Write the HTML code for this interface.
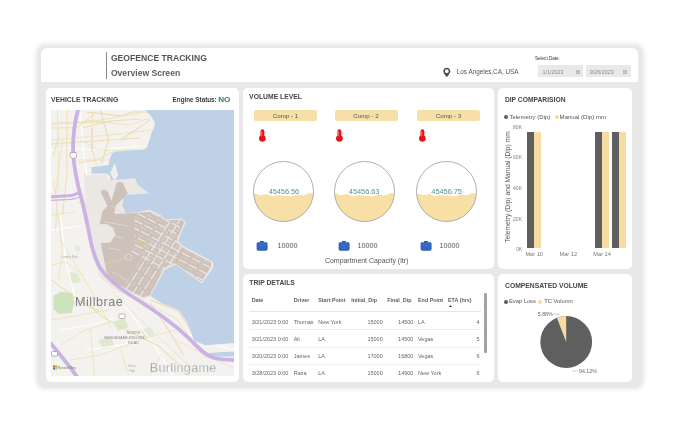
<!DOCTYPE html>
<html><head><meta charset="utf-8">
<style>
*{margin:0;padding:0;box-sizing:border-box}
html,body{width:680px;height:440px;background:#fff;overflow:hidden;font-family:"Liberation Sans",sans-serif;color:#333}
.a{position:absolute}
.t{position:absolute;white-space:nowrap;line-height:1}
.b{font-weight:bold}
#frame{left:37px;top:44.5px;width:606px;height:343.5px;background:#e8e8e8;border-radius:9px;box-shadow:0 0 4px 2px #ededed}
#hdr{left:41px;top:48px;width:597px;height:34px;background:#fff;border-radius:6px 6px 0 0}
.p{position:absolute;background:#fff;border-radius:5px}
.pill{top:109.8px;width:63px;height:11.2px;background:#f7dfa8;border-radius:2px;font-size:6.15px;line-height:11.2px;text-align:center;color:#555}
.thermo{top:128.5px;width:9px;height:13px}
.tank{top:161.3px;width:61px;height:61px}
.val{top:188.1px;width:61px;text-align:center;font-size:7.5px;color:#559595;letter-spacing:-0.1px}
.brief{top:239.6px;width:12px;height:11px}
.cap{top:242.2px;font-size:7.2px;color:#555}
.th{top:298.1px;font-size:5.4px;font-weight:bold;color:#5e5e5e}
.td{font-size:5.5px;color:#666}
.r{width:40px;text-align:right}
.dot{width:4px;height:4px;border-radius:50%}
.lg{color:#555}
.yl{left:502px;width:20px;text-align:right;font-size:5px;color:#808080;margin-top:0.8px}
.xl{top:251.8px;font-size:5.65px;color:#777}
.pl{font-size:5.25px;color:#666}
</style></head><body><div id="wrap" style="position:absolute;left:0;top:0;width:680px;height:440px;will-change:transform">
<div id="frame" class="a"></div>
<div id="hdr" class="a"></div>
<!-- header -->
<div class="a" style="left:105.5px;top:51.7px;width:1.3px;height:27.7px;background:#8a8a8a"></div>
<div class="t b" style="left:110.9px;top:53.7px;font-size:8.6px;color:#555">GEOFENCE TRACKING</div>
<div class="t b" style="left:110.9px;top:69.1px;font-size:8.6px;color:#5c5c5c">Overview Screen</div>
<svg class="a" style="left:442px;top:67px" width="10" height="11" viewBox="0 0 10 11"><path d="M4.8 0.7C2.9 0.7 1.3 2.3 1.3 4.2C1.3 6.4 4.8 10 4.8 10C4.8 10 8.3 6.4 8.3 4.2C8.3 2.3 6.7 0.7 4.8 0.7ZM4.8 2.3A1.9 1.9 0 1 1 4.8 6.1A1.9 1.9 0 1 1 4.8 2.3Z" fill="#4a4a4a" fill-rule="evenodd"/></svg>
<div class="t" style="left:456.8px;top:68.6px;font-size:6.35px;color:#555">Los Angeles,CA, USA</div>
<div class="t" style="left:534.9px;top:56.6px;font-size:4.6px;color:#333">Select Date:</div>
<div class="a" style="left:538.4px;top:65.4px;width:44.2px;height:12.1px;background:#e9e9e9"></div>
<div class="t" style="left:542.4px;top:69.6px;font-size:5.4px;color:#8a8a8a">1/1/2023</div>
<div class="a" style="left:585.8px;top:65.4px;width:44.8px;height:12.1px;background:#e9e9e9"></div>
<div class="t" style="left:589.8px;top:69.6px;font-size:5.4px;color:#8a8a8a">9/26/2023</div>
<svg class="a" style="left:575.5px;top:69.5px" width="4" height="4"><rect x="0.3" y="0.3" width="3.4" height="3.4" fill="none" stroke="#aaa" stroke-width="0.6"/><path d="M0.3 1.5H3.7M1.5 1.5V3.7M2.5 1.5V3.7" stroke="#aaa" stroke-width="0.5"/></svg>
<svg class="a" style="left:623px;top:69.5px" width="4" height="4"><rect x="0.3" y="0.3" width="3.4" height="3.4" fill="none" stroke="#aaa" stroke-width="0.6"/><path d="M0.3 1.5H3.7M1.5 1.5V3.7M2.5 1.5V3.7" stroke="#aaa" stroke-width="0.5"/></svg>

<!-- panels -->
<div class="p" style="left:46px;top:88px;width:192.5px;height:293.5px"></div>
<div class="p" style="left:242.5px;top:88px;width:251px;height:180.5px"></div>
<div class="p" style="left:242.5px;top:273.5px;width:251px;height:108px"></div>
<div class="p" style="left:498px;top:88px;width:134px;height:180.5px"></div>
<div class="p" style="left:498px;top:273.5px;width:134px;height:108px"></div>

<!-- vehicle tracking -->
<div class="t b" style="left:51px;top:97.2px;font-size:6.8px;color:#454545">VEHICLE TRACKING</div>
<div class="t b" style="left:172.6px;top:96.6px;font-size:6.3px;color:#3a3a3a">Engine Status:</div>
<div class="t b" style="left:218.2px;top:96px;font-size:8.1px;color:#2a806e">NO</div>
<!--MAP-->
<svg class="a" style="left:50.5px;top:110px" width="183" height="265.5" viewBox="50.5 110 183 265.5">
<rect x="50" y="109" width="185" height="268" fill="#f3f2ee"/>
<!-- parks -->
<path d="M53,296 L60,292 L72,293 L74,303 L71,313 L58,314 L53,309Z" fill="#cde3bd"/>
<path d="M70,272 L78,274 L80,282 L72,283 L68,278Z" fill="#dfeacf"/>
<path d="M98,340 L110,337 L114,346 L102,349Z" fill="#dfe9cf"/>
<path d="M113,322 L124,318 L128,327 L117,331Z" fill="#dce8cb"/>
<path d="M140,330 L150,327 L154,336 L144,338Z" fill="#e2ebd5"/>
<path d="M75,245 L80,247 L79,252 L74,250Z" fill="#e3ecd6"/>
<!-- white roads -->
<g fill="none" stroke="#ffffff" stroke-width="1.2">
<path d="M50,150 L70,148 L100,150 L140,146"/>
<path d="M50,230 L80,226"/>
<path d="M80,112 L84,160 L88,185"/>
<path d="M60,215 L65,260 L75,300"/>
<path d="M120,300 L150,340 L172,375"/>
<path d="M60,330 L90,325 L115,318"/>
<path d="M85,350 L120,345 L160,335"/>
<path d="M175,328 L205,342 L233,350"/>
</g>
<!-- minor roads -->
<g fill="none" stroke="#ede0b8" stroke-width="0.8">
<path d="M50,125 L100,120 L140,113"/>
<path d="M50,140 L72,138 L110,135 L150,130"/>
<path d="M57,110 L58,180 L55,230"/>
<path d="M62,140 L54,200"/>
<path d="M92,112 L92,150 L96,165"/>
<path d="M80,140 L98,150 L140,150"/>
<path d="M72,160 L110,160"/>
<path d="M85,120 L128,125 L150,118"/>
<path d="M50,215 L75,212"/>
<path d="M50,265 L65,262 L84,276"/>
<path d="M60,240 L90,290 L112,330"/>
<path d="M50,320 L80,315 L108,310"/>
<path d="M60,345 L85,330 L110,322"/>
<path d="M70,360 L100,355 L140,340 L175,330"/>
<path d="M110,290 L140,320 L170,348 L195,372"/>
<path d="M140,300 L175,318 L205,358"/>
<path d="M120,350 L128,375"/>
<path d="M160,355 L150,375"/>
<path d="M90,330 L94,375"/>
<path d="M175,340 L215,360 L233,368"/>
<path d="M53,180 L62,250 L58,280"/>
</g>
<g fill="none" stroke="#ebd9a8" stroke-width="1">
<path d="M100,110 L108,140 L101,164"/>
<path d="M86,112 L120,116 L132,112 L150,112"/>
<path d="M150,120 L120,140"/>
<path d="M84,174 L95,200 L87,207 L78,202"/>
<path d="M83,302 L104,318 L130,332 L158,346 L187,372"/>
<path d="M51,280 L78,300 L100,312"/>
<path d="M150,303 L168,330 L183,355"/>
<path d="M150,300 L178,311 L190,330 L196,342"/>
</g>
<g fill="none" stroke="#eedfae" stroke-width="1">
<path d="M50,123 L110,122"/>
<path d="M50,128 L77,127.7 L95,112.7"/>
<path d="M82.7,127.7 L110,121 L140,119"/>
<path d="M50,144 L110,140 L140,138"/>
<path d="M66.4,110 L66.4,175 L62,215"/>
<path d="M91,128 L91,152"/>
<path d="M58,137 L52.7,156"/>
<path d="M78,163 L96,160 L112,152"/>
</g>
<!-- airport light apron -->
<path d="M84,176 L91,175 L106,175 L110,181 L114,180 L134.6,178.2 L137.3,185 L149,193.2 L123.6,195 L121.8,206 L125.5,213.2 L140,211.4 L149,209.5 L160,215 L165,219.5 L181,218.4 L185.5,221.8 L177.5,240.5 L181,245 L212.7,262 L212.7,267.7 L201.4,283.6 L175,264.5 L164,270 L150,296 L140,302 L118,292 L100,278 L93,258 L88,228 L84,205Z" fill="#ebe8e4"/>
<!-- water -->
<path d="M145,110 L234,110 L234,343 L204.8,345.2 L193.8,340.8 L187.1,323 L178.3,309.9 L160.6,303 L150,296 L164,270 L175,264.5 L201.4,283.6 L212.7,267.7 L212.7,262 L181,245 L177.5,240.5 L185.5,221.8 L181,218.4 L165,219.5 L160,215 L149,209.5 L140,211.4 L125.5,213.2 L121.8,206 L123.6,195 L149,193.2 L137.3,185 L134.6,178.2 L114,180 L110,180.5 L109.5,176 L106,173.6 L91,173.8 L91,167.2 L108,165 L109.3,159 L111.4,153.6 L114,151.6 L143.7,149.5 L146.4,147.6 L149.1,139.4 L151.2,132.6 L153.2,128.5 L154.6,123 L150.5,116.2 Z" fill="#bed1e7"/>
<path d="M206,353.5 L214,352.5 L234,351.5 L234,356.5 L214,356.8 L206,357Z" fill="#bed1e7"/>
<!-- island sliver -->
<path d="M114.5,163.5 L117.6,175 L114,180.8 L109.6,173Z" fill="#f1f0ec"/>
<!-- airport dark -->
<path d="M100,191.4 L103.6,189.5 L107.3,191.4 L111,201 L116.4,182.3 L121.8,182.3 L127.3,193.2 L115,206 L114,214 L150,212 L160,216.5 L166,220.5 L180,219.8 L184,221.5 L176,241 L180,246.5 L210.5,262.5 L210.5,267 L201,281.5 L174,263 L163,268.5 L149.5,295.5 L142.3,297.3 L131.4,291.8 L111.4,281 L106,271.8 L100.5,244.5 L98.2,229.5 L101.8,211.4 L107,206 Z" fill="#cdc1b9"/>
<!-- runway/taxi highlights -->
<clipPath id="apc"><path d="M100,191.4 L103.6,189.5 L107.3,191.4 L111,201 L116.4,182.3 L121.8,182.3 L127.3,193.2 L115,206 L114,214 L150,212 L160,216.5 L166,220.5 L180,219.8 L184,221.5 L176,241 L180,246.5 L210.5,262.5 L210.5,267 L201,281.5 L174,263 L163,268.5 L149.5,295.5 L142.3,297.3 L131.4,291.8 L111.4,281 L106,271.8 L100.5,244.5 L98.2,229.5 L101.8,211.4 L107,206 Z"/></clipPath>
<clipPath id="apc2"><path d="M134,200 L240,200 L240,320 L128,320 L118,300 L134,240Z"/></clipPath>
<g clip-path="url(#apc)"><g clip-path="url(#apc2)" fill="none" stroke="#e9e4e0" stroke-width="1.4">
<path stroke-dasharray="9 2.5" d="M130.4,202.0 L236.9,257.3 M127.1,208.3 L233.5,263.7 M123.7,214.7 L230.2,270.1 M120.4,221.1 L226.9,276.5 M117.1,227.5 L223.6,282.9 M113.8,233.9 L220.3,289.3 M110.5,240.3 L216.9,295.7"/>
<path stroke-dasharray="7 3" d="M128.7,205.2 L235.2,260.5 M125.4,211.5 L231.9,266.9 M122.1,217.9 L228.6,273.3 M118.8,224.3 L225.2,279.7 M115.4,230.7 L221.9,286.1 M112.1,237.1 L218.6,292.5" stroke="#ddd5cf" stroke-width="0.8"/>
<path stroke-dasharray="10 2" d="M194.8,224.2 L140.7,308.3 M188.4,220.1 L134.4,304.2 M182.0,215.9 L128.0,300.1 M175.6,211.8 L121.6,295.9"/>
<path stroke-dasharray="6 3" d="M191.6,222.1 L137.6,306.2 M185.2,218.0 L131.2,302.1 M178.8,213.9 L124.8,298.0 M172.4,209.8 L118.4,293.9" stroke="#ddd5cf" stroke-width="0.8"/>
</g></g>
<g fill="none" stroke="#e0d9d4" stroke-width="0.9"><path d="M104,222 L128,226 M102,234 L122,238 M108,248 L120,250 M112,272 L126,280 M110,206 L124,214"/></g>
<g fill="none" stroke="#ddcfa6" stroke-width="1.1">
<path d="M104,263 L118,261 L126,257"/>
</g>
<path d="M96,224.5 L106,224 L112.5,227.7 L115,234.5 L110,242.5 L99,243 L96,238Z" fill="#ebe8e4"/>
<circle cx="128" cy="257.3" r="3.2" fill="none" stroke="#e0d8c8" stroke-width="1.2"/>
<rect x="140.5" y="241" width="3.6" height="3.6" fill="#efc46c"/>
<!-- highways -->
<g fill="none" stroke="#cab2e4" stroke-linecap="butt">
<path stroke-width="3.8" d="M78,108 C74.5,120 72.5,135 72.5,150 C73,168 77,185 81.8,201.8 C85,215 87,225 89,235 C91,248 94,257 99,267 C105,276 117,287 131,296 C150,308 172,322 190,340 C198,348 203,354 212,357.5 C220,360 226,360 236,360"/>
<path stroke-width="3" d="M48,196.8 L68,195.8 C73,195.4 77,194 80,191"/>
<path stroke-width="1.2" d="M48,200.4 L70,199.4 C75,199 79,197.5 82,195"/>
<path stroke-width="3.8" d="M48,341 C57,351 68,365 79,380"/>
</g>
<!-- shields -->
<path d="M70,152.5 L75.6,152.5 L76,156.8 L72.8,158.8 L69.6,156.8Z" fill="#fff" stroke="#777" stroke-width="0.5"/>
<rect x="118.5" y="314" width="6" height="4.5" rx="1" fill="#fff" stroke="#777" stroke-width="0.5"/>
<rect x="51" y="351.5" width="6" height="4.5" rx="1" fill="#fff" stroke="#777" stroke-width="0.5"/>
<!-- labels -->
<g font-family="Liberation Sans" fill="#7a7a7a" font-size="3.3" text-anchor="middle">
<text x="133" y="333.6" letter-spacing="0.3">NORTH</text>
<text x="124" y="338.6" letter-spacing="0.15" textLength="40">BURLINGAME-ROLLINS</text>
<text x="133" y="343.6" letter-spacing="0.3">ROAD</text>
</g>
<g font-family="Liberation Sans" fill="#aaa" font-size="2.6">
<text x="61" y="258" font-size="3.1">Lomita Park</text>
<text x="128" y="367">Mercy</text>
<text x="129" y="371.5">High</text>
</g>
<text x="74.5" y="306.1" font-family="Liberation Sans" font-size="12.6" fill="#808080" textLength="47.8">Millbrae</text>
<text x="149.2" y="372.4" font-family="Liberation Sans" font-size="12.6" fill="#858585" stroke="#e8e8e8" stroke-width="0.5" textLength="66.6">Burlingame</text>
<!-- bing logo -->
<rect x="52.5" y="365.5" width="2" height="2" fill="#f25022"/><rect x="54.7" y="365.5" width="2" height="2" fill="#7fba00"/>
<rect x="52.5" y="367.7" width="2" height="2" fill="#00a4ef"/><rect x="54.7" y="367.7" width="2" height="2" fill="#ffb900"/>
<text x="57.5" y="369" font-family="Liberation Sans" font-size="2.8" fill="#777">Microsoft Bing</text>
</svg>
<!--/MAP-->
<!-- volume level -->
<div class="t b" style="left:249.1px;top:93.8px;font-size:6.8px;color:#454545">VOLUME LEVEL</div>
<div class="a pill" style="left:254px">Comp - 1</div>
<div class="a pill" style="left:334.5px">Comp - 2</div>
<div class="a pill" style="left:417px">Comp - 3</div>
<svg class="a thermo" style="left:257.6px"><use href="#thermo"/></svg>
<svg class="a thermo" style="left:335px"><use href="#thermo"/></svg>
<svg class="a thermo" style="left:418px"><use href="#thermo"/></svg>
<svg width="0" height="0" style="position:absolute">
<defs>
<symbol id="thermo" viewBox="0 0 9 13">
<path d="M2.5,2.2 A1.9,1.9 0 0 1 6.3,2.2 L6.3,6.6 A3.4,3.4 0 1 1 2.5,6.6 Z" fill="#e5121a"/>
<path d="M3.3,2 L4.1,2 L4.1,7.2 L3.3,7.2Z" fill="#f59a9a" opacity="0.8"/>
<path d="M6.3,3.2 H7.4 M6.3,4.8 H7.4" stroke="#f06a6a" stroke-width="0.6"/>
</symbol>
<symbol id="brief" viewBox="0 0 12 11">
<rect x="4" y="0.9" width="3.8" height="1.6" rx="0.5" fill="#25489a"/>
<rect x="0.9" y="2.4" width="10.4" height="8" rx="1.3" fill="#3467c2" stroke="#27519f" stroke-width="0.5"/>
<path d="M1.5,5.2 H10.7" stroke="#4a7bd0" stroke-width="0.5"/>
</symbol>
<clipPath id="cc"><circle cx="30.5" cy="30.5" r="30"/></clipPath>
<symbol id="tank" viewBox="0 0 61 61">
<g clip-path="url(#cc)">
<path d="M0,33.5 C3,31.5 5,34.5 8,34.2 C11,34 12,32.2 15,33.4 C18,34.6 20,35.6 23,34.6 C26,33.6 28,35.2 31,34.8 C34,34.4 36,35.8 39,35.2 C42,34.6 44,32.8 47,33.8 C50,34.8 52,34.4 55,32.4 C57,31.2 59,32.8 61,33 L61,61 L0,61Z" fill="#f8dfa6"/>
</g>
<circle cx="30.5" cy="30.5" r="30" fill="none" stroke="#9c9c9c" stroke-width="0.8"/>
</symbol>
</defs>
</svg>
<svg class="a tank" style="left:253.4px"><use href="#tank"/></svg>
<svg class="a tank" style="left:333.6px"><use href="#tank"/></svg>
<svg class="a tank" style="left:416.1px"><use href="#tank"/></svg>
<div class="t val" style="left:253.4px">45456.56</div>
<div class="t val" style="left:333.6px">45456.63</div>
<div class="t val" style="left:416.1px">45456.75</div>
<svg class="a brief" style="left:256.2px"><use href="#brief"/></svg>
<svg class="a brief" style="left:337.5px"><use href="#brief"/></svg>
<svg class="a brief" style="left:419.5px"><use href="#brief"/></svg>
<div class="t cap" style="left:277.5px">10000</div>
<div class="t cap" style="left:357.5px">10000</div>
<div class="t cap" style="left:439.6px">10000</div>
<div class="t" style="left:325px;top:258.2px;font-size:6.95px;color:#555">Compartment Capacity (ltr)</div>
<!-- trip details -->
<div class="t b" style="left:249.3px;top:280.2px;font-size:6.76px;color:#454545">TRIP DETAILS</div>
<div class="t th" style="left:251.7px">Date</div>
<div class="t th" style="left:293.7px">Driver</div>
<div class="t th" style="left:318.2px">Start Point</div>
<div class="t th" style="left:351.2px">Initial_Dip</div>
<div class="t th" style="left:387.2px">Final_Dip</div>
<div class="t th" style="left:418px">End Point</div>
<div class="t th" style="left:448px">ETA (hrs)</div>
<svg class="a" style="left:449px;top:304.5px" width="3" height="2"><path d="M0,2 L1.5,0 L3,2Z" fill="#333"/></svg>
<div class="a" style="left:249px;top:311.3px;width:232px;height:0.8px;background:#ede6d2"></div>
<div class="a" style="left:249px;top:329.1px;width:232px;height:0.7px;background:#efefef"></div>
<div class="a" style="left:249px;top:346.8px;width:232px;height:0.7px;background:#efefef"></div>
<div class="a" style="left:249px;top:364.1px;width:232px;height:0.7px;background:#efefef"></div>
<div class="t td" style="left:251.7px;top:319.5px">3/21/2023 0:00</div>
<div class="t td" style="left:293.7px;top:319.5px">Thomas</div>
<div class="t td" style="left:318.2px;top:319.5px">New York</div>
<div class="t td r" style="left:342.7px;top:319.5px">15000</div>
<div class="t td r" style="left:373.4px;top:319.5px">14500</div>
<div class="t td" style="left:418px;top:319.5px">LA</div>
<div class="t td r" style="left:439.6px;top:319.5px">4</div>
<div class="t td" style="left:251.7px;top:337.2px">3/21/2023 0:00</div>
<div class="t td" style="left:293.7px;top:337.2px">Ali</div>
<div class="t td" style="left:318.2px;top:337.2px">LA</div>
<div class="t td r" style="left:342.7px;top:337.2px">15000</div>
<div class="t td r" style="left:373.4px;top:337.2px">14500</div>
<div class="t td" style="left:418px;top:337.2px">Vegas</div>
<div class="t td r" style="left:439.6px;top:337.2px">5</div>
<div class="t td" style="left:251.7px;top:354.4px">3/20/2023 0:00</div>
<div class="t td" style="left:293.7px;top:354.4px">James</div>
<div class="t td" style="left:318.2px;top:354.4px">LA</div>
<div class="t td r" style="left:342.7px;top:354.4px">17000</div>
<div class="t td r" style="left:373.4px;top:354.4px">16800</div>
<div class="t td" style="left:418px;top:354.4px">Vegas</div>
<div class="t td r" style="left:439.6px;top:354.4px">6</div>
<div class="t td" style="left:251.7px;top:371.2px">3/28/2023 0:00</div>
<div class="t td" style="left:293.7px;top:371.2px">Raza</div>
<div class="t td" style="left:318.2px;top:371.2px">LA</div>
<div class="t td r" style="left:342.7px;top:371.2px">15000</div>
<div class="t td r" style="left:373.4px;top:371.2px">14900</div>
<div class="t td" style="left:418px;top:371.2px">New York</div>
<div class="t td r" style="left:439.6px;top:371.2px">6</div>
<div class="a" style="left:484px;top:293px;width:3.2px;height:59.8px;background:#a3a3a3;border-radius:1px"></div>
<!-- dip comparision -->
<div class="t b" style="left:504.9px;top:97.3px;font-size:6.73px;color:#454545">DIP COMPARISION</div>
<div class="a dot" style="left:503.6px;top:114.5px;background:#5b5b5b"></div>
<div class="t lg" style="left:509.4px;top:113.5px;font-size:6.05px">Telemetry (Dip)</div>
<div class="a dot" style="left:554.6px;top:114.5px;background:#f7dca0"></div>
<div class="t lg" style="left:559.6px;top:113.5px;font-size:6.05px">Manual (Dip) mm</div>
<div class="t yl" style="top:124.0px">80K</div>
<div class="t yl" style="top:154.6px">60K</div>
<div class="t yl" style="top:185.20000000000002px">40K</div>
<div class="t yl" style="top:215.8px">20K</div>
<div class="t yl" style="top:246.4px">0K</div>
<div class="t" style="left:507.7px;top:187px;font-size:6.7px;color:#555;transform:translate(-50%,-50%) rotate(-90deg);line-height:1">Telemetry (Dip) and Manual (Dip) mm</div>
<div class="a" style="left:527px;top:131.5px;width:6.9px;height:116.5px;background:#605f5f"></div>
<div class="a" style="left:533.9px;top:131.5px;width:6.7px;height:116.5px;background:#f7dca2"></div>
<div class="a" style="left:595px;top:131.5px;width:6.9px;height:116.5px;background:#605f5f"></div>
<div class="a" style="left:601.9px;top:131.5px;width:6.7px;height:116.5px;background:#f7dca2"></div>
<div class="a" style="left:612px;top:131.5px;width:6.9px;height:116.5px;background:#605f5f"></div>
<div class="a" style="left:618.9px;top:131.5px;width:6.7px;height:116.5px;background:#f7dca2"></div>
<div class="t xl" style="left:525.4px">Mar 10</div>
<div class="t xl" style="left:559.5px">Mar 12</div>
<div class="t xl" style="left:593.3px">Mar 14</div>
<!-- compensated -->
<div class="t b" style="left:505.1px;top:283.1px;font-size:6.75px;color:#454545">COMPENSATED VOLUME</div>
<div class="a dot" style="left:503.8px;top:299.8px;background:#5b5b5b"></div>
<div class="t lg" style="left:509px;top:298.9px;font-size:5.75px">Evap Loss</div>
<div class="a dot" style="left:538.3px;top:299.8px;background:#f7dca0"></div>
<div class="t lg" style="left:544.3px;top:298.9px;font-size:5.75px">TC Volumn</div>
<svg class="a" style="left:0;top:0" width="680" height="440" viewBox="0 0 680 440"><circle cx="566.2" cy="342.0" r="25.9" fill="#605f5f"/><path d="M566.2,342.0 L566.2,316.1 A25.9,25.9 0 0 0 556.85,317.85 Z" fill="#f7dca2"/><path d="M553.5,314 H558.5 V316" fill="none" stroke="#999" stroke-width="0.5"/><path d="M572,371 H578" fill="none" stroke="#999" stroke-width="0.5"/></svg>
<div class="t pl" style="left:537.8px;top:311.6px">5.88%</div>
<div class="t pl" style="left:579px;top:369.2px">94.12%</div>
</div></body></html>
